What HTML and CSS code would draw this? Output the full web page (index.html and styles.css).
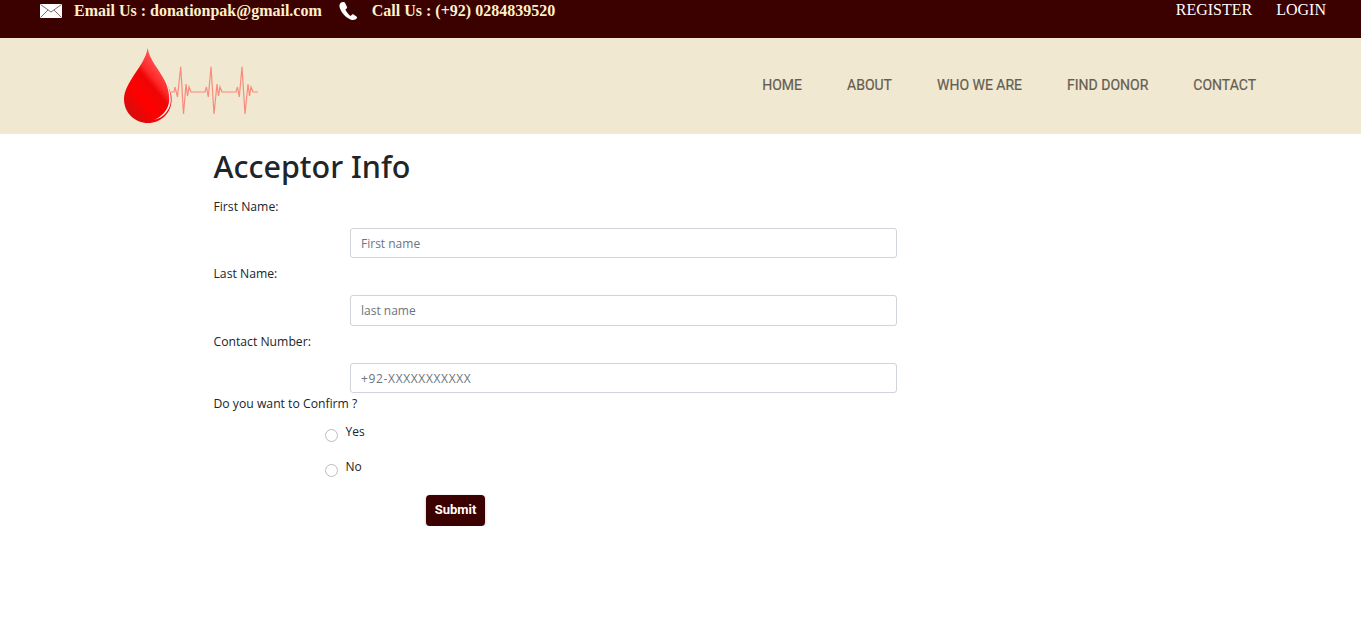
FILE: index.html
```html
<!DOCTYPE html>
<html lang="en">
<head>
    <meta charset="UTF-8">
    <meta name="viewport" content="width=device-width, initial-scale=1.0">
    <title>Acceptor Info</title>
    <link rel="stylesheet" href="styles.css">
</head>
<body>
    <div class="topbar">
        <div class="topbar-contact">
            <svg class="icon-mail" width="22" height="14" viewBox="0 0 22 14">
                <rect width="22" height="14" fill="#fff"/>
                <path d="M0.5 0.5 L11 8 L21.500 0.5 M0.5 13.500 L8 6 M21.500 13.500 L14 6" fill="none" stroke="#8a6a6a" stroke-width="1"/>
            </svg>
            <span class="contact-text">Email Us : donationpak@gmail.com</span>
            <svg class="icon-phone" width="20" height="20" viewBox="0 0 20 20">
                <path d="M3 1.500 C1.200 3 1 5 2 7.500 C3.500 11.500 7.500 16.500 12.500 18.500 C15 19.500 17.500 19 18.800 17.300 C19.200 16.600 19 16 18.400 15.600 L15.600 13.600 C15 13.200 14.400 13.300 13.900 13.800 L12.600 15 C10.500 13.800 8.300 10.800 7.400 8.600 L8.600 7.600 C9.200 7.100 9.300 6.500 9 5.900 L7 1.800 C6.600 1 5.900 0.8 5.200 1 Z" fill="#fff"/>
            </svg>
            <span class="contact-text">Call Us : (+92) 0284839520</span>
        </div>
        <div class="topbar-links">
            <a href="#">REGISTER</a>
            <a href="#">LOGIN</a>
        </div>
    </div>

    <div class="header">
        <svg class="logo" width="137" height="78" viewBox="0 0 137 78">
            <defs>
                <linearGradient id="dropFill" x1="0.85" y1="0.1" x2="0.2" y2="0.95">
                    <stop offset="0" stop-color="#ff7070"/>
                    <stop offset="0.35" stop-color="#ff2a2a"/>
                    <stop offset="0.45" stop-color="#ee0505"/>
                    <stop offset="0.7" stop-color="#ff0000"/>
                    <stop offset="1" stop-color="#d40d0d"/>
                </linearGradient>
            </defs>
            <path d="M49 45 H52 L53 40 L55.500 50 L58.700 19.700 L61.500 67 L64 37 L65.500 49 L67 40 L69 45 H83 L84.500 40 L86.300 50 L89 19.700 L92 67 L95 37 L96.500 49 L98 40 L100 45 H114 L115.500 40 L117.300 50 L120 19.700 L123 67 L126 37 L127.500 49 L129 40 L131 45 H136" fill="none" stroke="#f98b7c" stroke-width="1.200"/>
            <path d="M25.700 1 C27 12 38 24 43 34 C47 41 49.700 46 49.700 52 C49.700 66 39 76 26 76 C13 76 2 66 2 52 C2 44 7 36 12 28 C18 19 24 11 25.700 1 Z" fill="url(#dropFill)"/>
            <path d="M39.700 26 C44 35 47.500 44 47.200 53 C47 62 40 70 31.300 73 C41 71.500 48.800 63 48.800 53 C48.800 43 44 34 39.700 26 Z" fill="#fff" opacity="0.9"/>
        </svg>
        <div class="nav">
            <a href="#">HOME</a>
            <a href="#">ABOUT</a>
            <a href="#">WHO WE ARE</a>
            <a href="#">FIND DONOR</a>
            <a href="#">CONTACT</a>
        </div>
    </div>

    <div class="content">
        <h1>Acceptor Info</h1>
        <form>
            <label class="field-label">First Name:</label>
            <input class="field-input" type="text" placeholder="First name">
            <label class="field-label">Last Name:</label>
            <input class="field-input" type="text" placeholder="last name">
            <label class="field-label">Contact Number:</label>
            <input class="field-input phone-input" type="text" placeholder="+92-XXXXXXXXXXX">
            <label class="field-label confirm-label">Do you want to Confirm ?</label>
            <div class="radio-row">
                <input type="radio" name="confirm" id="yes">
                <label for="yes">Yes</label>
            </div>
            <div class="radio-row">
                <input type="radio" name="confirm" id="no">
                <label for="no">No</label>
            </div>
            <button type="button" class="submit-btn">Submit</button>
        </form>
    </div>
</body>
</html>
```

FILE: styles.css
```css
body {
    margin: 0;
    padding: 0;
    background-color: #fff;
    font-family: "Open Sans", sans-serif;
    color: #212529;
}
.topbar {
    background-color: #3b0000;
    height: 38px;
    display: flex;
    justify-content: space-between;
    padding: 0 35px 0 40px;
}
.topbar-contact {
    display: flex;
    align-items: center;
    height: 21px;
}
.icon-mail {
    margin-right: 12px;
}
.icon-phone {
    margin: 0 14px 0 16px;
}
.contact-text {
    font-family: "Liberation Serif", serif;
    font-weight: bold;
    font-size: 16px;
    color: #fdf0c8;
}
.topbar-links {
    display: flex;
    gap: 24px;
    height: 19px;
    align-items: center;
}
.topbar-links a {
    font-family: "Liberation Serif", serif;
    font-size: 16px;
    color: #fff;
    text-decoration: none;
}
.header {
    background-color: #f0e8d0;
    height: 96px;
    display: flex;
    justify-content: space-between;
    align-items: center;
    padding: 0 105px 0 122px;
}
.nav {
    display: flex;
    gap: 45px;
    margin-bottom: 2px;
}
.nav a {
    font-family: Roboto, sans-serif;
    font-size: 14px;
    color: #655d51;
    text-decoration: none;
    -webkit-text-stroke: 0.2px #655d51;
}
.content {
    padding-left: 213.5px;
    width: 684px;
}
h1 {
    font-family: "Noto Sans", sans-serif;
    font-size: 30.5px;
    font-weight: 500;
    line-height: 38px;
    margin: 13px 0 0;
}
.field-label {
    display: block;
    font-size: 12.2px;
    line-height: 18px;
    color: #212529;
    margin-top: 6.95px;
}
.content h1 + form .field-label:first-child {
    margin-top: 12.95px;
}
.field-input {
    display: block;
    box-sizing: border-box;
    width: 547px;
    height: 30.5px;
    margin: 12px 0 0 136.5px;
    padding: 0 10px;
    border: 1px solid #ced4da;
    border-radius: 3px;
    font-family: "Open Sans", sans-serif;
    font-size: 12px;
    background-color: #fff;
}
.field-input::placeholder {
    color: #6c757d;
}
.phone-input::placeholder {
    letter-spacing: 0.65px;
}
.field-label.confirm-label {
    margin-top: 1.5px;
}
.radio-row {
    display: flex;
    align-items: flex-start;
    height: 35px;
    font-size: 12px;
    padding-left: 111.5px;
    margin-top: 10px;
}
.radio-row + .radio-row {
    margin-top: 0;
}
.radio-row input {
    appearance: none;
    box-sizing: border-box;
    width: 13px;
    height: 13px;
    border: 1px solid #bbb;
    border-radius: 50%;
    margin: 6px 7.5px 0 0;
    background-color: #fff;
}
.radio-row label {
    line-height: 18px;
}
.submit-btn {
    display: block;
    box-sizing: border-box;
    width: 59px;
    height: 31px;
    margin: 2px 0 0 212.5px;
    padding: 0 0 2px;
    background-color: #3b0000;
    color: #fff;
    border: none;
    border-radius: 4px;
    font-family: Roboto, sans-serif;
    font-weight: bold;
    font-size: 13px;
    box-shadow: 0 1px 3px rgba(0, 0, 0, 0.25);
}
```
